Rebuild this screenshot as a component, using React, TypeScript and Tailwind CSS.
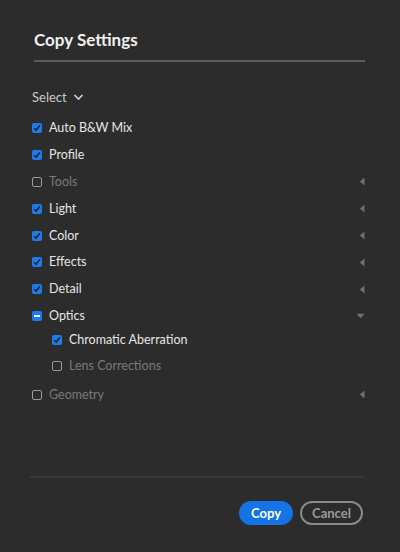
import React from 'react';

type Row = {
  label: string;
  state: 'on' | 'off' | 'mixed';
  arrow?: 'left' | 'down';
  sub?: boolean;
};

const rows: Row[] = [
  { label: 'Auto B&W Mix', state: 'on' },
  { label: 'Profile', state: 'on' },
  { label: 'Tools', state: 'off', arrow: 'left' },
  { label: 'Light', state: 'on', arrow: 'left' },
  { label: 'Color', state: 'on', arrow: 'left' },
  { label: 'Effects', state: 'on', arrow: 'left' },
  { label: 'Detail', state: 'on', arrow: 'left' },
  { label: 'Optics', state: 'mixed', arrow: 'down' },
  { label: 'Chromatic Aberration', state: 'on', sub: true },
  { label: 'Lens Corrections', state: 'off', sub: true },
  { label: 'Geometry', state: 'off', arrow: 'left' },
];

function Box({ state }: { state: Row['state'] }) {
  if (state === 'off') {
    return <span className="w-[10px] h-[10px] rounded-[2px] border-[1.5px] border-[#9a9a9a] shrink-0" />;
  }
  return (
    <span className="w-[10px] h-[10px] rounded-[2px] bg-[#1b7cf0] shrink-0 flex items-center justify-center">
      {state === 'on' ? (
        <svg width="8" height="8" viewBox="0 0 8 8">
          <path d="M1.2 4.2 L3.1 6.1 L6.8 1.6" fill="none" stroke="#1a1a1a" strokeWidth="1.6" />
        </svg>
      ) : (
        <span className="w-[6px] h-[2px] bg-white" />
      )}
    </span>
  );
}

function ItemRow({ r }: { r: Row }) {
  return (
    <div className={`flex items-center ${r.sub ? 'pl-[20px] h-[26px]' : 'h-[26.8px]'}`}>
      <Box state={r.state} />
      <span
        className={`ml-[7px] text-[12.5px] leading-[18px] ${r.state === 'off' ? 'text-[#7a7a7a]' : 'text-[#e6e6e6]'}`}
      >
        {r.label}
      </span>
      <span className="ml-auto flex items-center">
        {r.arrow === 'left' && (
          <svg width="6" height="9" viewBox="0 0 6 9">
            <path d="M5.5 0.5 L5.5 8.5 L0.8 4.5 Z" fill="#6e6e6e" />
          </svg>
        )}
        {r.arrow === 'down' && (
          <svg width="9" height="6" viewBox="0 0 9 6">
            <path d="M0.5 0.8 L8.5 0.8 L4.5 5.5 Z" fill="#6e6e6e" />
          </svg>
        )}
      </span>
    </div>
  );
}

export default function App() {
  const main = rows.slice(0, 8);
  const subs = rows.slice(8, 10);
  const last = rows[10];
  return (
    <div
      className="w-[400px] h-[552px] bg-[#2c2c2c] flex flex-col"
      style={{ fontFamily: 'Lato, "Open Sans", sans-serif' }}
    >
      <div className="pt-[29px] pl-[34px] pr-[35px]">
        <h1 className="text-[17px] font-bold text-[#f0f0f0] leading-[22px]">Copy Settings</h1>
        <div className="mt-[9px] h-[2px] bg-[#5c5c5c]" />
      </div>

      <div className="mt-[26px] pl-[32px] flex items-center gap-[6px] text-[13px] text-[#c8c8c8] leading-[18px]">
        <span>Select</span>
        <svg width="11" height="10" viewBox="0 0 11 10">
          <path d="M1.5 3 L5.5 7 L9.5 3" fill="none" stroke="#d0d0d0" strokeWidth="1.7" />
        </svg>
      </div>

      <div className="mt-[9px] flex flex-col pl-[32px] pr-[35px]">
        {main.map((r) => (
          <ItemRow key={r.label} r={r} />
        ))}
        <div className="-mt-[2px] flex flex-col">
          {subs.map((r) => (
            <ItemRow key={r.label} r={r} />
          ))}
        </div>
        <div className="mt-[2px]">
          <ItemRow r={last} />
        </div>
      </div>

      <div className="mt-auto">
        <div className="ml-[30px] mr-[35px] h-[2px] bg-[#383838]" />
        <div className="flex justify-end gap-[7px] pr-[37px] pt-[23px] pb-[27px]">
          <button className="h-[24px] w-[54px] rounded-full bg-[#1473e6] text-white text-[13px] font-bold leading-none">
            Copy
          </button>
          <button className="h-[24px] w-[63px] rounded-full border-2 border-[#8a8a8a] text-[#9a9a9a] text-[13px] font-bold leading-none">
            Cancel
          </button>
        </div>
      </div>
    </div>
  );
}
